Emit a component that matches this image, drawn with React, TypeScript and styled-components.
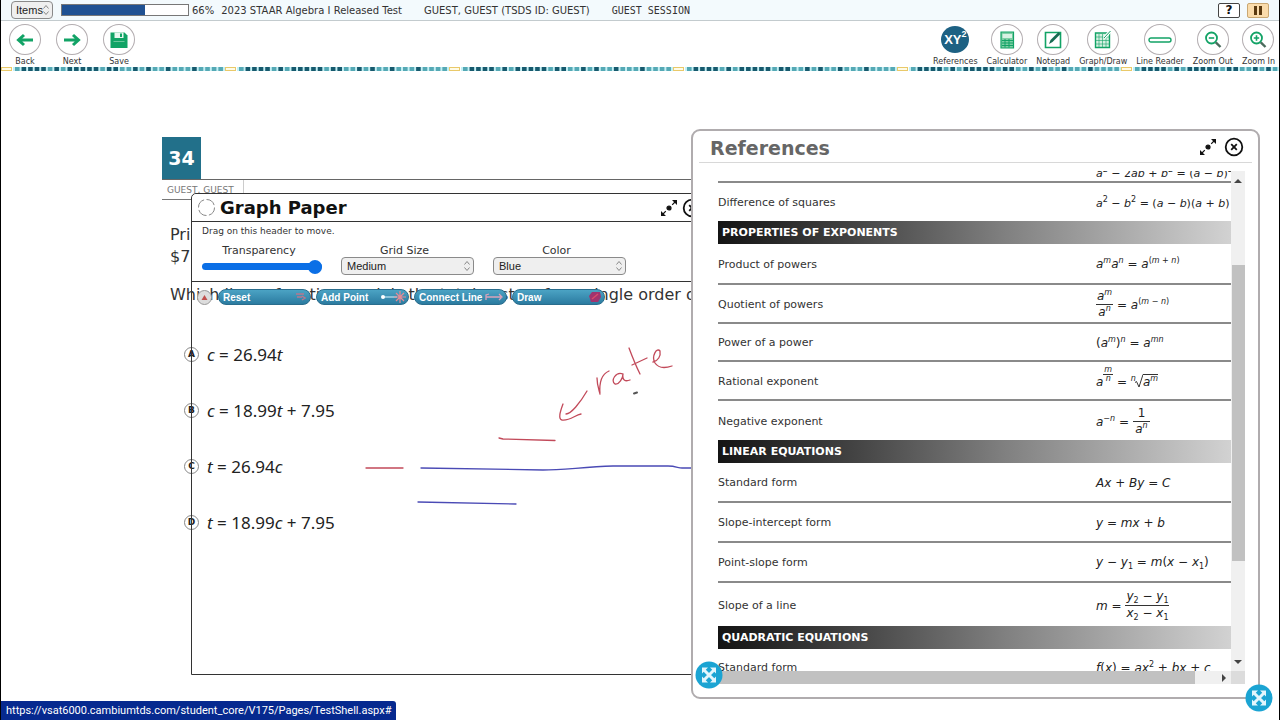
import React from "react";
import styled, { createGlobalStyle, css } from "styled-components";

const sans = '"DejaVu Sans", Verdana, sans-serif';
const arial = '"Liberation Sans", Arial, sans-serif';

const GlobalStyle = createGlobalStyle`
  * { box-sizing: border-box; }
  html, body { margin: 0; background: #fff; }
  body { font-family: ${sans}; color: #333; }
  button, select, input { font: inherit; color: inherit; margin: 0; padding: 0; }
`;

const Page = styled.div`
  position: relative;
  min-height: 100vh;
  overflow: hidden;
  border: solid #000;
  border-width: 0 1px;
  display: flex;
  flex-direction: column;
`;

/* ---------- top bar ---------- */

const TopBar = styled.header`
  display: flex;
  align-items: center;
  height: 21px;
  padding: 0 10px;
  background: #f3fafd;
  border-bottom: 1px solid #c3cbce;
  font-size: 10px;
  line-height: 14px;
`;

const SelectWrap = styled.span`
  position: relative;
  display: inline-flex;
  svg {
    position: absolute;
    right: 3px;
    top: 50%;
    transform: translateY(-50%);
    pointer-events: none;
  }
`;

const Select = styled.select<{ $small?: boolean }>`
  appearance: none;
  width: ${(p) => (p.$small ? "42px" : "133px")};
  height: 18px;
  padding-left: ${(p) => (p.$small ? "4px" : "5px")};
  border: 1px solid #8a8a8a;
  border-radius: 4px;
  background: #efefef;
  color: #222;
  font-family: ${arial};
  font-size: 11px;
`;

const Progress = styled.div`
  width: 128px;
  height: 12px;
  margin: 0 3px 0 8px;
  border: 1px solid #777;
  background: #fff;
`;

const ProgressFill = styled.div`
  height: 100%;
  background: #1f5192;
`;

const TopText = styled.span<{ $gap: number; $mono?: boolean }>`
  margin-left: ${(p) => p.$gap}px;
  padding-top: 2px;
  white-space: nowrap;
  ${(p) => p.$mono && css`font-family: "DejaVu Sans Mono", monospace;`}
`;

const TopActions = styled.div`
  display: flex;
  gap: 7px;
  margin-left: auto;
`;

const TopButton = styled.button<{ $pause?: boolean }>`
  display: flex;
  align-items: center;
  justify-content: center;
  width: 22px;
  height: 15px;
  border: 1px solid ${(p) => (p.$pause ? "#c9a873" : "#444")};
  border-radius: 2px;
  background: ${(p) => (p.$pause ? "#fadcab" : "#fff")};
  color: #111;
  font-size: 12px;
  line-height: 12px;
  font-weight: 700;
`;

/* ---------- toolbar ---------- */

const Toolbar = styled.nav`
  display: flex;
  justify-content: space-between;
  height: 46px;
  padding: 3px 4px 0 8px;
`;

const ToolGroup = styled.div<{ $gap: number }>`
  display: flex;
  gap: ${(p) => p.$gap}px;
`;

const Tool = styled.button`
  display: flex;
  flex-direction: column;
  align-items: center;
  min-width: 32px;
  border: 0;
  background: none;
  font-size: 8px;
  line-height: 10px;
  white-space: nowrap;
`;

const ToolCircle = styled.span<{ $filled?: boolean }>`
  display: flex;
  align-items: center;
  justify-content: center;
  width: ${(p) => (p.$filled ? 28 : 32)}px;
  height: ${(p) => (p.$filled ? 28 : 32)}px;
  margin: ${(p) => (p.$filled ? "2px" : "0")} 0 ${(p) => (p.$filled ? "4px" : "2px")};
  border: ${(p) => (p.$filled ? "0" : "1px solid #b3adb0")};
  border-radius: 50%;
  background: ${(p) => (p.$filled ? "#1d6183" : "#fff")};
  color: #fff;
  font-family: ${arial};
  font-size: 13px;
  font-weight: 700;
  sup { font-size: 9px; line-height: 9px; align-self: flex-start; margin-top: 4px; }
`;

const StripSvg = styled.svg`
  display: block;
  width: 100%;
  height: 4px;
`;

/* ---------- question ---------- */

const Question = styled.main`
  flex: 1;
  padding: 66px 24px 0 161px;
`;

const NumberRow = styled.div`
  display: flex;
  border-bottom: 1px solid #666;
`;

const QuestionNumber = styled.h1`
  display: flex;
  align-items: center;
  justify-content: center;
  width: 39px;
  height: 42px;
  margin: 0;
  background: #22708a;
  color: #fff;
  font-size: 19px;
`;

const Student = styled.div`
  display: flex;
  height: 20px;
  border-bottom: 1px solid #777;
  color: #777;
  font-size: 9px;
  line-height: 20px;
  span { width: 82px; height: 14px; padding-left: 5px; border-right: 1px solid #ccc; }
`;

const Prompt = styled.div`
  padding: 24px 0 0 8px;
  font-size: 16px;
  line-height: 22px;
  white-space: nowrap;
  p { margin: 0 0 16px; }
`;

const Choices = styled.ol`
  display: flex;
  flex-direction: column;
  gap: 32px;
  margin: 0;
  padding: 20px 0 0 22px;
  list-style: none;
`;

const Choice = styled.li`
  display: flex;
  align-items: center;
  height: 24px;
  gap: 8px;
  color: #222;
  font-family: "Noto Sans", sans-serif;
  font-size: 17px;
`;

const Letter = styled.span`
  display: flex;
  align-items: center;
  justify-content: center;
  width: 15px;
  height: 15px;
  border: 1px solid #888;
  border-radius: 50%;
  font-family: ${sans};
  font-size: 9px;
  font-weight: 700;
`;

/* ---------- floating windows ---------- */

const GraphWindow = styled.section`
  position: absolute;
  left: 190px;
  top: 193px;
  width: 528px;
  height: 482px;
  display: flex;
  flex-direction: column;
  border: 1px solid #333;
  border-radius: 5px 0 0 0;
`;

const GraphTitle = styled.header`
  display: flex;
  align-items: center;
  height: 28px;
  padding: 0 16px 0 5px;
  gap: 4px;
  background: #fff;
  border-bottom: 1px solid #333;
  border-radius: 5px 0 0 0;
  color: #111;
  h2 { margin: 0 auto 0 0; font-size: 18px; line-height: 24px; }
`;

const IconButton = styled.button`
  display: flex;
  border: 0;
  background: none;
  color: #111;
`;

const GraphOptions = styled.div`
  height: 60px;
  padding: 2px 0 0 10px;
  background: #fff;
  border-bottom: 1px solid #333;
  p { margin: 0; font-size: 9px; line-height: 14px; }
`;

const OptionRow = styled.div`
  display: flex;
  gap: 19px;
  margin-top: 6px;
`;

const Option = styled.div<{ $slider?: boolean }>`
  display: flex;
  flex-direction: column;
  align-items: center;
  width: ${(p) => (p.$slider ? "120px" : "133px")};
  font-size: 11px;
  line-height: 13px;
  label { padding-right: 6px; }
`;

const Slider = styled.input`
  appearance: none;
  width: 100%;
  height: 18px;
  background: none;
  &::-webkit-slider-runnable-track {
    height: 7px;
    border-radius: 4px;
    background: #0b6fe6;
  }
  &::-webkit-slider-thumb {
    appearance: none;
    width: 14px;
    height: 14px;
    margin-top: -3px;
    border-radius: 50%;
    background: #0b6fe6;
  }
`;

const Canvas = styled.div`
  position: relative;
  flex: 1;
`;

const Ink = styled.svg`
  position: absolute;
  left: 0;
  top: 0;
  fill: none;
  stroke-linecap: round;
  stroke-linejoin: round;
`;

const DrawTools = styled.div`
  display: flex;
  align-items: center;
  gap: 5px;
  padding: 7px 0 0 5px;
`;

const ClearButton = styled.button`
  display: flex;
  align-items: center;
  justify-content: center;
  width: 15px;
  height: 15px;
  margin-right: 1px;
  border: 1px solid #999;
  border-radius: 50%;
  background: #ddd;
`;

const Pill = styled.button`
  display: flex;
  align-items: center;
  justify-content: space-between;
  width: 93px;
  height: 16px;
  padding: 0 2px 0 4px;
  border: 1px solid #2a6d8d;
  border-radius: 8px;
  background: linear-gradient(#4ba3c4, #2b7ba0);
  color: #fff;
  font-family: ${arial};
  font-size: 10px;
  font-weight: 700;
  white-space: nowrap;
`;

const RefWindow = styled.section`
  position: absolute;
  top: 129px;
  right: 19px;
  width: 569px;
  height: 570px;
  padding: 0 13px 13px;
  display: flex;
  flex-direction: column;
  background: #fff;
  border: 2px solid #b0acae;
  border-radius: 9px;
`;

const RefTitle = styled.header`
  display: flex;
  align-items: center;
  gap: 7px;
  height: 32px;
  margin: 0 -7px 8px;
  padding: 0 8px 0 11px;
  border-bottom: 1px solid #d8d8d8;
  h2 { margin: 2px auto 0 0; color: #666; font-size: 19px; line-height: 24px; }
`;

const RefBody = styled.div`
  flex: 1;
  min-height: 0;
  display: grid;
  grid-template: minmax(0, 1fr) 13px / minmax(0, 1fr) 14px;
`;

const Viewport = styled.div`
  overflow: hidden;
  margin-left: 12px;
`;

const VBar = styled.div`
  display: flex;
  flex-direction: column;
  align-items: center;
  justify-content: space-between;
  background: #f0f0f0;
  padding: 8px 0 7px;
`;

const VThumb = styled.div`
  width: 13px;
  height: 296px;
  margin-bottom: 18px;
  background: #c1c1c1;
`;

const HBar = styled.div`
  display: flex;
  align-items: center;
  justify-content: space-between;
  background: #f0f0f0;
  padding-right: 5px;
`;

const HThumb = styled.div`
  width: 94%;
  height: 13px;
  background: #c1c1c1;
`;

const Arrow = styled.span<{ $dir: "up" | "down" | "right" }>`
  border: 4px solid transparent;
  ${(p) => p.$dir === "up" && "border-top: 0; border-bottom-color: #444;"}
  ${(p) => p.$dir === "down" && "border-bottom: 0; border-top-color: #444;"}
  ${(p) => p.$dir === "right" && "border-right: 0; border-left-color: #444;"}
`;

const Corner = styled.div`
  background: #dcdcdc;
`;

const Table = styled.table`
  width: 552px;
  margin-top: -28px;
  border-collapse: separate;
  border-spacing: 0;
  table-layout: fixed;
  font-size: 11px;
  line-height: 14px;
`;

const Row = styled.tr<{ $h: number; $rule?: boolean; $low?: boolean }>`
  height: ${(p) => p.$h}px;
  th, td {
    padding: ${(p) => (p.$low ? "0" : "2px 0 0")};
    text-align: left;
    font-weight: 400;
    white-space: nowrap;
    vertical-align: ${(p) => (p.$low ? "bottom" : "middle")};
    ${(p) => p.$rule && css`border-bottom: 2px solid #8a8a8a;`}
  }
  th { width: 378px; }
`;

const SectionHead = styled.th`
  height: 23px;
  padding: 1px 0 0 4px;
  text-align: left;
  color: #fff;
  font-weight: 700;
  background: linear-gradient(90deg, #141414, #444 25%, #808080 52%, #e0e0e0);
`;

const Formula = styled.span<{ $small?: boolean }>`
  display: inline-flex;
  align-items: center;
  color: #222;
  font-size: ${(p) => (p.$small ? 11 : 12)}px;
  white-space: pre;
  sup, sub { font-size: 8px; line-height: 8px; }
`;

const Frac = styled.span<{ $tiny?: boolean }>`
  display: inline-flex;
  flex-direction: column;
  align-items: center;
  font-size: ${(p) => (p.$tiny ? 8 : 12)}px;
  line-height: ${(p) => (p.$tiny ? 8 : 15)}px;
  ${(p) => p.$tiny && css`align-self: flex-start; margin: -6px 0 9px;`}
  > span:first-child { border-bottom: 1px solid #333; padding: 0 1px; }
`;

const Root = styled.span`
  display: inline-flex;
  svg { margin-left: -2px; }
  > span { border-top: 1px solid #333; line-height: 13px; }
`;

const Handle = styled.button<{ $side: "left" | "right" }>`
  position: absolute;
  width: 28px;
  height: 28px;
  padding: 0;
  border: 0;
  border-radius: 50%;
  background: none;
  ${(p) => (p.$side === "left" ? "left: 2px; bottom: 8px;" : "right: -15px; bottom: -15px;")}
`;

const StatusUrl = styled.div`
  position: absolute;
  left: 0;
  bottom: 0;
  padding: 0 5px;
  height: 19px;
  border-radius: 0 3px 0 0;
  background: #06298f;
  color: #fff;
  font-family: Roboto, sans-serif;
  font-size: 11px;
  line-height: 19px;
`;

/* ---------- drawings ---------- */

const Chevrons = () => (
  <svg width="8" height="12" viewBox="0 0 8 12" fill="none" stroke="#888" strokeWidth="1">
    <path d="M1.5 4.5 4 1.5 6.5 4.5M1.5 7.5 4 10.5 6.5 7.5" />
  </svg>
);

const Expand = () => (
  <svg width="18" height="18" viewBox="0 0 18 18" fill="currentColor" stroke="currentColor" strokeWidth="1.2">
    <circle cx="9" cy="9" r="2" />
    <path d="M12.2 5.800 15 3M5.800 12.200 3 15" fill="none" />
    <path d="M12 1h5v5zM1 12v5h5z" stroke="none" />
  </svg>
);

const Close = () => (
  <svg width="20" height="20" viewBox="0 0 20 20" fill="none" stroke="currentColor" strokeWidth="1.8">
    <circle cx="10" cy="10" r="8.3" />
    <path d="m7.2 7.2 5.6 5.6m0-5.6-5.6 5.6" />
  </svg>
);

const ResizeIcon = () => (
  <svg width="28" height="28" viewBox="0 0 28 28">
    <circle cx="14" cy="14" r="13.500" fill="#1ba4d3" />
    <path d="M9 9 19 19M19 9 9 19" stroke="#e4f6fc" strokeWidth="3" />
    <path d="M7 6.500h6L7 12.500zM21 6.500v6L15 6.500zM21 21.500h-6L21 15.500zM7 21.500v-6L13 21.500z" fill="#e4f6fc" />
  </svg>
);

const green = "#12a366";

const toolIcons: Record<string, React.ReactNode> = {
  Back: <path d="M18 10H4M9 5l-5.500 5L9 15" strokeWidth="3" />,
  Next: <path d="M2 10h14M11 5l5.500 5L11 15" strokeWidth="3" />,
  Save: (
    <>
      <path d="M1.500 2.500h14l3 3v12.500h-17z" fill={green} stroke="none" />
      <path d="M5.500 2.500h9v5.500h-9z" fill="#e9f7ef" stroke="none" />
      <path d="M11 3.500h2v3.500h-2z" fill={green} stroke="none" />
      <path d="M4.500 11.500h11" stroke="#6cc79c" strokeWidth="1" />
    </>
  ),
  Calculator: (
    <>
      <path d="M4 2h12.500v16H4z" fill="#7fcfa6" strokeWidth="1.200" />
      <path d="M5.500 4h9.500v4h-9.500z" fill="#d8f2e4" stroke="none" />
      <path d="M5 10.500h11M5 13h11M5 15.500h11M8 9v8.500M12 9v8.500" strokeWidth="1" />
    </>
  ),
  Notepad: (
    <>
      <path d="M2.500 2.500h15v15h-15z" strokeWidth="1.600" />
      <path d="M6 14 7.500 10l8-8 2 2-8 8z" fill="#176b52" stroke="none" />
    </>
  ),
  "Graph/Draw": (
    <>
      <path d="M2.500 3h14v14.500h-14z" fill="#d5f0e1" strokeWidth="1.400" />
      <path d="M6 4v13M9.500 4v13M13 4v13M3 7h13M3 10.500h13M3 14h13" strokeWidth=".6" />
      <path d="m11 8 6.500-7" stroke="#fff" strokeWidth="3" />
      <path d="m11 8 6.500-7" strokeWidth="1" />
    </>
  ),
  "Zoom Out": (
    <>
      <circle cx="8.500" cy="8" r="5.500" strokeWidth="1.800" />
      <path d="M5.800 8h5.400" strokeWidth="1.600" />
      <path d="m12.800 12.300 4.700 4.700" stroke="#4a6a5c" strokeWidth="2.400" />
    </>
  ),
  "Zoom In": (
    <>
      <circle cx="8.500" cy="8" r="5.500" strokeWidth="1.800" />
      <path d="M5.800 8h5.400M8.500 5.300v5.400" strokeWidth="1.600" />
      <path d="m12.800 12.300 4.700 4.700" stroke="#4a6a5c" strokeWidth="2.400" />
    </>
  ),
};

const ToolItem = ({ name }: { name: string }) => (
  <Tool>
    <ToolCircle $filled={name === "References"}>
      {name === "References" ? (
        <>XY<sup>2</sup></>
      ) : name === "Line Reader" ? (
        <svg width="24" height="6" viewBox="0 0 24 6" fill="#fff" stroke={green} strokeWidth="1.400">
          <rect x="1" y="1" width="22" height="4" rx="2" />
        </svg>
      ) : (
        <svg width="20" height="20" viewBox="0 0 20 20" fill="none" stroke={green}>
          {toolIcons[name]}
        </svg>
      )}
    </ToolCircle>
    {name}
  </Tool>
);

const stripPattern = "LDDDDLDLDDDDDLDDLLDLDLLDLLLDLLLL";

const Strip = () => (
  <StripSvg aria-hidden="true">
    <defs>
      <pattern id="strip" width="224" height="4" patternUnits="userSpaceOnUse">
        <rect x="12" width="212" height="4" fill="#c4f0f5" />
        <rect x=".5" y=".5" width="10" height="3" fill="#fffbe6" stroke="#e9c96a" />
        {stripPattern.split("").map((c, i) => (
          <rect key={i} x={14 + i * 6.56} width="4.600" height="4" fill={c === "D" ? "#175a6e" : "#55a9b5"} />
        ))}
      </pattern>
    </defs>
    <rect width="100%" height="4" fill="url(#strip)" />
  </StripSvg>
);

const Spark = () => (
  <svg width="26" height="12" viewBox="0 0 26 12" stroke="#e88a94" strokeWidth="1.200">
    <path d="M3 6h14" stroke="#bfe3f2" />
    <circle cx="3" cy="6" r="2" fill="#fff" stroke="none" />
    <path d="M20 0v12M14 6h12M16 2l8 8M24 2l-8 8" />
  </svg>
);

const LineIcon = () => (
  <svg width="20" height="12" viewBox="0 0 20 12" fill="none" stroke="#d9a3bb" strokeWidth="1.300">
    <path d="M2 9V4l3-1M2 6h15M15 3l3 3-3 3" />
  </svg>
);

const DrawIcon = () => (
  <svg width="14" height="12" viewBox="0 0 14 12">
    <path d="M1 5 4 1h8l1 5-3 5H3z" fill="#a0346f" />
    <path d="m4 8 6-5" stroke="#d94a6a" strokeWidth="1.500" />
  </svg>
);

const ResetIcon = () => (
  <svg width="14" height="12" viewBox="0 0 14 12" fill="none" stroke="#b7788f" strokeWidth="1.500">
    <path d="M2 3h8M3 6h5M8 5l3 2-3 2" />
  </svg>
);

const Radical = () => (
  <svg width="9" height="14" viewBox="0 0 9 14" fill="none" stroke="#333">
    <path d="M1 8.500 2.500 7.500 5 13 9 .5" />
  </svg>
);

/* ---------- data ---------- */

const rest = ["References", "Calculator", "Notepad", "Graph/Draw", "Line Reader", "Zoom Out", "Zoom In"];

const choices: [string, React.ReactNode][] = [
  ["A", <><i>c</i> = 26.94<i>t</i></>],
  ["B", <><i>c</i> = 18.99<i>t</i> + 7.95</>],
  ["C", <><i>t</i> = 26.94<i>c</i></>],
  ["D", <><i>t</i> = 18.99<i>c</i> + 7.95</>],
];

/* Sets letters in italics; ^{..} and _{..} become superscripts and subscripts. */
const italics = (s: string) =>
  s.split(/([A-Za-z]+)/).map((part, i) => (i % 2 ? <i key={i}>{part}</i> : part));

const M = ({ t }: { t: string }) => (
  <span>
    {t.split(/([\^_]\{[^}]*\})/).map((part, i) => {
      const body = part.slice(2, -1);
      if (part.startsWith("^{")) return <sup key={i}>{italics(body)}</sup>;
      if (part.startsWith("_{")) return <sub key={i}>{italics(body)}</sub>;
      return <React.Fragment key={i}>{italics(part)}</React.Fragment>;
    })}
  </span>
);

type Entry =
  | { section: string }
  | { label: string; h: number; rule?: boolean; low?: boolean; small?: boolean; f: React.ReactNode };

const entries: Entry[] = [
  { label: "", h: 40, rule: true, low: true, small: true, f: <M t="a^{2} − 2ab + b^{2} = (a − b)^{2}" /> },
  { label: "Difference of squares", h: 38, small: true, f: <M t="a^{2} − b^{2} = (a − b)(a + b)" /> },
  { section: "PROPERTIES OF EXPONENTS" },
  { label: "Product of powers", h: 41, rule: true, f: <M t="a^{m}a^{n} = a^{(m + n)}" /> },
  {
    label: "Quotient of powers", h: 39, rule: true,
    f: <><Frac><M t="a^{m}" /><M t="a^{n}" /></Frac><M t=" = a^{(m − n)}" /></>,
  },
  { label: "Power of a power", h: 38, rule: true, f: <M t="(a^{m})^{n} = a^{mn}" /> },
  {
    label: "Rational exponent", h: 39, rule: true,
    f: <><M t="a" /><Frac $tiny><M t="m" /><M t="n" /></Frac><M t=" = ^{n}" /><Root><Radical /><M t="a^{m}" /></Root></>,
  },
  { label: "Negative exponent", h: 39, f: <><M t="a^{−n} = " /><Frac><M t=" 1 " /><M t="a^{n}" /></Frac></> },
  { section: "LINEAR EQUATIONS" },
  { label: "Standard form", h: 40, rule: true, f: <M t="Ax + By = C" /> },
  { label: "Slope-intercept form", h: 40, rule: true, f: <M t="y = mx + b" /> },
  { label: "Point-slope form", h: 40, rule: true, f: <M t="y − y_{1} = m(x − x_{1})" /> },
  {
    label: "Slope of a line", h: 43,
    f: <><M t="m = " /><Frac><M t="y_{2} − y_{1}" /><M t="x_{2} − x_{1}" /></Frac></>,
  },
  { section: "QUADRATIC EQUATIONS" },
  { label: "Standard form", h: 36, f: <M t="f(x) = ax^{2} + bx + c" /> },
];

export default function App() {
  return (
    <>
      <GlobalStyle />
      <Page>
        <TopBar>
          <SelectWrap>
            <Select $small aria-label="Items" defaultValue="Items">
              <option>Items</option>
            </Select>
            <Chevrons />
          </SelectWrap>
          <Progress role="progressbar" aria-label="Progress" aria-valuenow={66}>
            <ProgressFill style={{ width: "66%" }} />
          </Progress>
          <TopText $gap={0}>66%</TopText>
          <TopText $gap={7}>2023 STAAR Algebra I Released Test</TopText>
          <TopText $gap={22}>GUEST, GUEST (TSDS ID: GUEST)</TopText>
          <TopText $gap={22} $mono>GUEST SESSION</TopText>
          <TopActions>
            <TopButton aria-label="Help">?</TopButton>
            <TopButton $pause aria-label="Pause">
              <svg width="8" height="9" viewBox="0 0 8 9" fill="#5a3a10"><path d="M0 0h3v9H0zM5 0h3v9H5z" /></svg>
            </TopButton>
          </TopActions>
        </TopBar>
        <Toolbar>
          <ToolGroup $gap={15}>
            {["Back", "Next", "Save"].map((n) => <ToolItem key={n} name={n} />)}
          </ToolGroup>
          <ToolGroup $gap={9}>
            {rest.map((n) => <ToolItem key={n} name={n} />)}
          </ToolGroup>
        </Toolbar>
        <Strip />

        <Question>
          <NumberRow><QuestionNumber>34</QuestionNumber></NumberRow>
          <Student><span>GUEST, GUEST</span></Student>
          <Prompt>
            <p>Price<br />$7.95</p>
            <p>Which linear function models the total cost, c, for a single order of</p>
          </Prompt>
          <Choices>
            {choices.map(([letter, text]) => (
              <Choice key={letter}><Letter>{letter}</Letter><span>{text}</span></Choice>
            ))}
          </Choices>
        </Question>

        <GraphWindow>
          <GraphTitle>
            <svg width="19" height="19" viewBox="0 0 19 19" fill="none" stroke="#888" strokeWidth="1">
              <circle cx="9.500" cy="9.500" r="8" strokeDasharray="10 2.500" />
            </svg>
            <h2>Graph Paper</h2>
            <IconButton aria-label="Expand graph paper"><Expand /></IconButton>
            <IconButton aria-label="Close graph paper"><Close /></IconButton>
          </GraphTitle>
          <GraphOptions>
            <p>Drag on this header to move.</p>
            <OptionRow>
              <Option $slider>
                <label htmlFor="transparency">Transparency</label>
                <Slider id="transparency" type="range" defaultValue={100} />
              </Option>
              <Option>
                <label htmlFor="grid">Grid Size</label>
                <SelectWrap>
                  <Select id="grid" defaultValue="Medium"><option>Medium</option></Select>
                  <Chevrons />
                </SelectWrap>
              </Option>
              <Option>
                <label htmlFor="color">Color</label>
                <SelectWrap>
                  <Select id="color" defaultValue="Blue"><option>Blue</option></Select>
                  <Chevrons />
                </SelectWrap>
              </Option>
            </OptionRow>
          </GraphOptions>
          <Canvas>
            <Ink width="526" height="392" viewBox="192 282 526 392" strokeWidth="1.300">
              <g stroke="#c24a5a">
                <path d="M366 468h37M499 438l4 1 52 1.500" />
                <path d="M587 391C580 403 571 414 566 414M563 404C560 412 558 419 562 420 570 421 575 415 581 414" />
                <path d="M597 378c0 7 2 12 3 16C599 382 602 374 609 371" />
                <path d="M623 374c-7-3-13 7-8 10 4 1 8-6 8-10-1 6 2 8 7 6" />
                <path d="M629 348c3 8 7 18 11 26M632 365l15-7" />
                <path d="M653 362c5-1 8-6 7-11-3-4-9 5-5 12 4 6 11 5 17 3" />
                <path d="M634 393.500l3-1" stroke="#555" strokeWidth="2" />
              </g>
              <g stroke="#4a4ab5">
                <path d="M421 468l122 2c20 0 40-3 70-4h55c8 0 10 2 14 2h20" />
                <path d="M418 502l98 2" />
              </g>
            </Ink>
            <DrawTools>
              <ClearButton aria-label="Clear">
                <svg width="7" height="7" viewBox="0 0 7 7" fill="#c0504d"><path d="M3.500 1 6.500 6h-6z" /></svg>
              </ClearButton>
              <Pill>Reset<ResetIcon /></Pill>
              <Pill>Add Point<Spark /></Pill>
              <Pill>Connect Line<LineIcon /></Pill>
              <Pill>Draw<DrawIcon /></Pill>
            </DrawTools>
          </Canvas>
        </GraphWindow>

        <RefWindow>
          <RefTitle>
            <h2>References</h2>
            <IconButton aria-label="Expand references"><Expand /></IconButton>
            <IconButton aria-label="Close references"><Close /></IconButton>
          </RefTitle>
          <RefBody>
            <Viewport>
              <Table>
                <colgroup><col style={{ width: 378 }} /><col /></colgroup>
                <tbody>
                  {entries.map((e, i) =>
                    "section" in e ? (
                      <tr key={i}><SectionHead colSpan={2}>{e.section}</SectionHead></tr>
                    ) : (
                      <Row key={i} $h={e.h} $rule={e.rule} $low={e.low}>
                        <th scope="row">{e.label}</th>
                        <td><Formula $small={e.small}>{e.f}</Formula></td>
                      </Row>
                    )
                  )}
                </tbody>
              </Table>
            </Viewport>
            <VBar><Arrow $dir="up" /><VThumb /><Arrow $dir="down" /></VBar>
            <HBar><HThumb /><Arrow $dir="right" /></HBar>
            <Corner />
          </RefBody>
          <Handle $side="left" aria-label="Resize from left"><ResizeIcon /></Handle>
          <Handle $side="right" aria-label="Resize from right"><ResizeIcon /></Handle>
        </RefWindow>

        <StatusUrl>https://vsat6000.cambiumtds.com/student_core/V175/Pages/TestShell.aspx#</StatusUrl>
      </Page>
    </>
  );
}
